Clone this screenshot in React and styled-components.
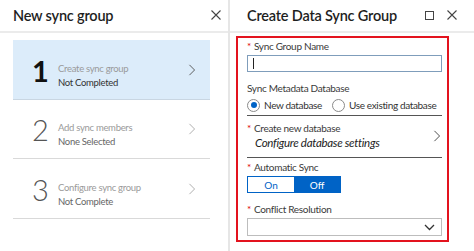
import React from "react";
import styled, { createGlobalStyle } from "styled-components";

const Global = createGlobalStyle`
  html, body { margin: 0; padding: 0; background: #fff; }
  body { font-family: Lato, "Open Sans", sans-serif; width: 474px; height: 251px; overflow: hidden; }
  * { box-sizing: border-box; }
`;

const Page = styled.div`
  display: flex;
  width: 474px;
  height: 251px;
  background: #fff;
  white-space: nowrap;
`;

const Blade = styled.section`
  width: ${(p) => p.$w}px;
  flex: none;
  display: flex;
  flex-direction: column;
  border-right: ${(p) => (p.$sep ? "2px solid #e6e6e6" : "none")};
`;

const Header = styled.header`
  height: 33px;
  display: flex;
  align-items: center;
  justify-content: space-between;
  padding: 0 ${(p) => p.$pr}px 1px ${(p) => p.$pl}px;
  border-bottom: 2px solid #ebebeb;
`;

const Title = styled.h1`
  margin: 0;
  font-size: 14.5px;
  font-weight: 600;
  letter-spacing: -0.2px;
  color: #1e1e1e;
`;

const HeaderIcons = styled.div`
  display: flex;
  gap: 13px;
  align-items: center;
`;

const Steps = styled.div`
  padding: 7px 18px 0 13px;
  display: flex;
  flex-direction: column;
`;

const Step = styled.div`
  height: ${(p) => p.$h}px;
  display: flex;
  align-items: center;
  background: ${(p) => (p.$active ? "#dcecfa" : "transparent")};
  border-bottom: 1px solid ${(p) => (p.$active ? "#c9d6e2" : "#d9d9d9")};
  padding: 0 14px 0 19px;
`;

const Num = styled.div`
  width: 26px;
  font-size: 29px;
  line-height: 28px;
  padding-top: 2px;
  font-weight: ${(p) => (p.$active ? 700 : 300)};
  color: ${(p) => (p.$active ? "#111" : "#555")};
`;

const StepText = styled.div`
  flex: 1;
  display: flex;
  flex-direction: column;
  gap: 1px;
  padding-top: 11px;
`;

const StepTitle = styled.div`
  font-size: 9.5px;
  letter-spacing: -0.3px;
  color: #9a9a9a;
  line-height: 13px;
`;

const StepSub = styled.div`
  font-size: 9.5px;
  letter-spacing: -0.3px;
  color: ${(p) => (p.$active ? "#333" : "#666")};
  line-height: 13px;
`;

const FormWrap = styled.div`
  padding: 3px 25px 0 6px;
`;

const Form = styled.div`
  border: 2px solid #e3131e;
  height: 206px;
  padding: 2px 5px 0 9px;
  display: flex;
  flex-direction: column;
`;

const Label = styled.div`
  font-size: 10px;
  letter-spacing: -0.3px;
  color: #3a3a3a;
  line-height: 13px;
  margin-top: ${(p) => p.$mt || 0}px;
  display: flex;
  gap: 3px;
`;

const Star = styled.span`
  color: #d00;
`;

const Input = styled.div`
  margin-top: 2px;
  height: 17px;
  border: 1px solid #7f9dbb;
  display: flex;
  align-items: center;
  padding-left: 5px;
`;

const Caret = styled.div`
  width: 1px;
  height: 11px;
  background: #222;
`;

const RadioRow = styled.div`
  display: flex;
  align-items: center;
  gap: 10px;
  margin-top: 2px;
  height: 16px;
`;

const RadioItem = styled.label`
  display: flex;
  align-items: center;
  gap: 4px;
  font-size: 10px;
  letter-spacing: -0.35px;
  color: #333;
`;

const RadioCircle = styled.span`
  width: 13px;
  height: 13px;
  border-radius: 50%;
  border: 1px solid #8a8a8a;
  display: flex;
  align-items: center;
  justify-content: center;
  &::after {
    content: "";
    width: 6px;
    height: 6px;
    border-radius: 50%;
    background: ${(p) => (p.$on ? "#0063c6" : "transparent")};
  }
`;

const Rule = styled.div`
  height: 1px;
  background: #555;
  margin-top: ${(p) => p.$mt || 0}px;
`;

const LinkRow = styled.div`
  display: flex;
  align-items: center;
  justify-content: space-between;
  margin-top: 6px;
  padding-right: 1px;
`;

const LinkText = styled.div`
  display: flex;
  flex-direction: column;
`;

const Italic = styled.div`
  font-size: 11.5px;
  letter-spacing: -0.3px;
  font-style: italic;
  color: #222;
  line-height: 15px;
  padding-left: 8px;
`;

const Toggle = styled.div`
  margin-top: 2px;
  display: flex;
  width: 94px;
  height: 17px;
  border: 1px solid #0063c6;
`;

const ToggleHalf = styled.div`
  flex: 1;
  display: flex;
  align-items: center;
  justify-content: center;
  font-size: 10px;
  background: ${(p) => (p.$on ? "#0063c6" : "#fff")};
  color: ${(p) => (p.$on ? "#fff" : "#0063c6")};
`;

const Select = styled.div`
  margin-top: 2px;
  height: 18px;
  border: 1px solid #bdbdbd;
  display: flex;
  align-items: center;
  justify-content: flex-end;
  padding-right: 6px;
`;

const Chevron = ({ size = 12, color = "#777" }) => (
  <svg width={size / 2 + 2} height={size} viewBox="0 0 8 14">
    <path d="M1 1 L7 7 L1 13" fill="none" stroke={color} strokeWidth="1.1" />
  </svg>
);

const Close = ({ color = "#444" }) => (
  <svg width="10" height="10" viewBox="0 0 10 10">
    <path d="M0.5 0.5 L9.5 9.5 M9.5 0.5 L0.5 9.5" stroke={color} strokeWidth="1.1" />
  </svg>
);

const Maximize = () => (
  <svg width="9" height="9" viewBox="0 0 9 9">
    <rect x="0.5" y="0.5" width="8" height="8" fill="none" stroke="#444" strokeWidth="1" />
  </svg>
);

const Down = () => (
  <svg width="11" height="7" viewBox="0 0 11 7">
    <path d="M1 1 L5.5 5.5 L10 1" fill="none" stroke="#333" strokeWidth="1.3" />
  </svg>
);

const steps = [
  { n: "1", t: "Create sync group", s: "Not Completed", active: true, h: 60 },
  { n: "2", t: "Add sync members", s: "None Selected", h: 59 },
  { n: "3", t: "Configure sync group", s: "Not Complete", h: 60 },
];

export default function App() {
  return (
    <Page>
      <Global />
      <Blade $w={230} $sep>
        <Header $pl={13} $pr={7}>
          <Title>New sync group</Title>
          <Close />
        </Header>
        <Steps>
          {steps.map((st) => (
            <Step key={st.n} $active={st.active} $h={st.h}>
              <Num $active={st.active}>{st.n}</Num>
              <StepText>
                <StepTitle>{st.t}</StepTitle>
                <StepSub $active={st.active}>{st.s}</StepSub>
              </StepText>
              <Chevron color={st.active ? "#555" : "#aaa"} />
            </Step>
          ))}
        </Steps>
      </Blade>
      <Blade $w={244}>
        <Header $pl={17} $pr={17}>
          <Title>Create Data Sync Group</Title>
          <HeaderIcons>
            <Maximize />
            <Close />
          </HeaderIcons>
        </Header>
        <FormWrap>
          <Form>
            <Label>
              <Star>*</Star>Sync Group Name
            </Label>
            <Input>
              <Caret />
            </Input>
            <Label $mt={10}>Sync Metadata Database</Label>
            <RadioRow>
              <RadioItem>
                <RadioCircle $on />
                New database
              </RadioItem>
              <RadioItem>
                <RadioCircle />
                Use existing database
              </RadioItem>
            </RadioRow>
            <Rule $mt={2} />
            <LinkRow>
              <LinkText>
                <Label>
                  <Star>*</Star>Create new database
                </Label>
                <Italic>Configure database settings</Italic>
              </LinkText>
              <Chevron color="#444" />
            </LinkRow>
            <Rule $mt={7} />
            <Label $mt={3}>
              <Star>*</Star>Automatic Sync
            </Label>
            <Toggle>
              <ToggleHalf>On</ToggleHalf>
              <ToggleHalf $on>Off</ToggleHalf>
            </Toggle>
            <Label $mt={10}>
              <Star>*</Star>Conflict Resolution
            </Label>
            <Select>
              <Down />
            </Select>
          </Form>
        </FormWrap>
      </Blade>
    </Page>
  );
}
